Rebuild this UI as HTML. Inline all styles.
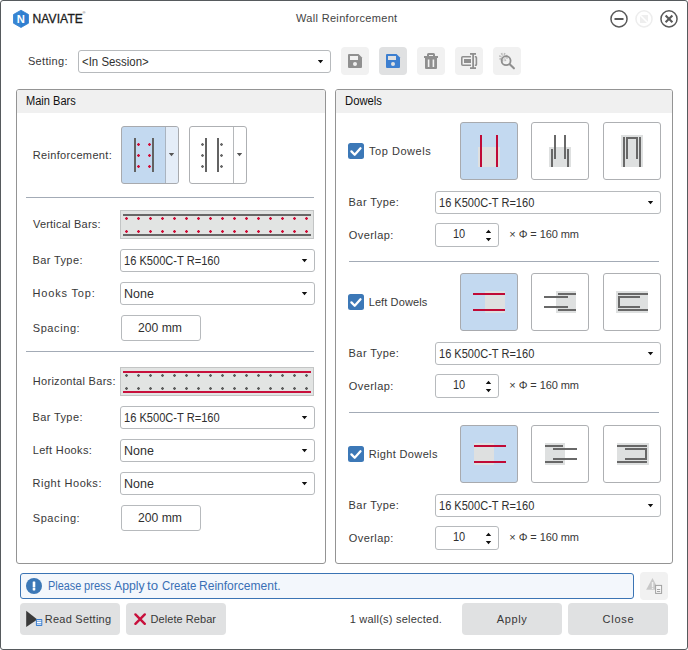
<!DOCTYPE html>
<html lang="en">
<head>
<meta charset="utf-8">
<title>Wall Reinforcement</title>
<style>
html,body{margin:0;padding:0;background:#fff;}
body{width:688px;height:650px;overflow:hidden;}
#win{position:relative;width:686px;height:648px;border:1px solid #565a5d;border-radius:3px;background:#fff;overflow:hidden;font-family:"Liberation Sans",Arial,sans-serif;}
#win>*{position:absolute;box-sizing:border-box;margin:-1px 0 0 -1px;}
.t{white-space:nowrap;line-height:1;transform-origin:0 0;}
.panel{border:1px solid #949494;border-radius:3px;background:#fff;}
.phead{position:absolute;left:0;top:0;right:0;height:23px;background:#f0f0f0;border-radius:2px 2px 0 0;}
.sep{height:1px;background:#a3abb6;}
.combo,.box{border:1px solid #b7babd;border-radius:3px;background:#fff;}
.tb{width:28px;height:28px;border-radius:4px;background:#f1f1f1;}
.tb.on{background:#e0e1e2;}
.ib{width:58px;height:58px;border:1px solid #aeb0b3;border-radius:3px;background:#fff;}
.ib.sel{background:#c3d9f0;border-color:#a8aaae;}
.btn{width:100px;height:32px;border-radius:4px;background:#e0e1e2;}
.chk{width:16px;height:16px;border-radius:2.5px;background:#3c78b7;}
.barimg{width:194px;height:29px;border:1px solid #c3c5c5;background:#e2e4e3;}
svg{display:block;overflow:visible;}

</style>
</head>
<body>
<div id="win">
<div class="combo" style="left:78px;top:50px;width:253px;height:23px;"></div>
<div class="tb" style="left:341px;top:47px;"></div>
<div class="tb on" style="left:379px;top:47px;"></div>
<div class="tb" style="left:417px;top:47px;"></div>
<div class="tb" style="left:455px;top:47px;"></div>
<div class="tb" style="left:493px;top:47px;"></div>
<div class="panel" style="left:16px;top:89px;width:310px;height:475px;"><div class="phead"></div></div>
<div class="panel" style="left:335px;top:89px;width:338px;height:475px;"><div class="phead"></div></div>
<div class="ib sel" style="left:121px;top:126px;"><div style="position:absolute;left:43px;top:0;width:13px;height:56px;box-sizing:border-box;background:#e4edf8;border-left:1px solid #aab4c0;border-radius:0 2px 2px 0"></div></div>
<div class="ib" style="left:189px;top:126px;"><div style="position:absolute;left:43px;top:0;width:0;height:56px;border-left:1px solid #b5b8bb"></div></div>
<div class="sep" style="left:26px;top:197px;width:288px;height:1px;"></div>
<div class="sep" style="left:26px;top:351px;width:288px;height:1px;"></div>
<div class="barimg" style="left:120px;top:210px;"></div>
<div class="barimg" style="left:120px;top:367px;"></div>
<div class="combo" style="left:120px;top:249px;width:195px;height:23px;"></div>
<div class="combo" style="left:120px;top:282px;width:195px;height:23px;"></div>
<div class="combo" style="left:120px;top:406px;width:195px;height:23px;"></div>
<div class="combo" style="left:120px;top:439px;width:195px;height:23px;"></div>
<div class="combo" style="left:120px;top:472px;width:195px;height:23px;"></div>
<div class="box" style="left:121px;top:315px;width:80px;height:26px;"></div>
<div class="box" style="left:121px;top:505px;width:80px;height:26px;"></div>
<div class="chk" style="left:348px;top:143px;"></div>
<div class="ib sel" style="left:460px;top:122px;"></div>
<div class="ib" style="left:531px;top:122px;"></div>
<div class="ib" style="left:603px;top:122px;"></div>
<div class="chk" style="left:348px;top:294px;"></div>
<div class="ib sel" style="left:460px;top:273px;"></div>
<div class="ib" style="left:531px;top:273px;"></div>
<div class="ib" style="left:603px;top:273px;"></div>
<div class="chk" style="left:348px;top:446px;"></div>
<div class="ib sel" style="left:460px;top:425px;"></div>
<div class="ib" style="left:531px;top:425px;"></div>
<div class="ib" style="left:603px;top:425px;"></div>
<div class="combo" style="left:435px;top:191px;width:226px;height:23px;"></div>
<div class="box" style="left:435px;top:223px;width:64px;height:24px;"></div>
<div class="combo" style="left:435px;top:342px;width:226px;height:23px;"></div>
<div class="box" style="left:435px;top:374px;width:64px;height:24px;"></div>
<div class="combo" style="left:435px;top:494px;width:226px;height:23px;"></div>
<div class="box" style="left:435px;top:526px;width:64px;height:24px;"></div>
<div class="sep" style="left:349px;top:261px;width:310px;height:1px;"></div>
<div class="sep" style="left:349px;top:412px;width:310px;height:1px;"></div>
<div class="status" style="left:20px;top:573px;width:614px;height:26px;border:1px solid #3b74b4;border-radius:3px;background:#f3f7fc;"></div>
<div class="tb" style="left:640px;top:572px;background:#f1f1f1;"></div>
<div class="btn" style="left:20px;top:603px;"></div>
<div class="btn" style="left:126px;top:603px;"></div>
<div class="btn" style="left:462px;top:603px;"></div>
<div class="btn" style="left:568px;top:603px;"></div><svg width="688" height="650" viewBox="0 0 688 650" style="left:0;top:0;pointer-events:none">
<defs><g id="pd" shape-rendering="crispEdges"><rect x="-1.5" y="-0.5" width="3" height="1"/><rect x="-0.5" y="-1.5" width="1" height="3"/><rect x="-1.5" y="-1.5" width="3" height="3" opacity="0.28"/></g></defs>
<g><path d="M21 10.2 L28.5 14.5 L28.5 23.2 L21 27.5 L13.5 23.2 L13.5 14.5 Z" fill="#2f7ed0" stroke="#2f7ed0" stroke-width="0.8" stroke-linejoin="round"/><path d="M21 10.2 L13.5 14.5 L13.5 23.2 L21 27.5 Z" fill="#4d94dc" opacity=".3"/><text x="20.9" y="22.8" text-anchor="middle" font-family="Liberation Sans, Arial, sans-serif" font-weight="bold" font-size="11.2" fill="#fff">N</text></g>
<g fill="none" stroke="#595959" stroke-width="1.5"><circle cx="619" cy="18.9" r="8.05"/><circle cx="669" cy="18.9" r="8.05"/></g>
<rect x="614.5" y="18" width="9" height="2" fill="#595959"/>
<path d="M665.6 15.5 L672.4 22.3 M672.4 15.5 L665.6 22.3" stroke="#595959" stroke-width="2.1" fill="none"/>
<g><circle cx="644" cy="18.9" r="8.05" fill="none" stroke="#ededed" stroke-width="1.5"/><path d="M640 15 h8 v8 h-8z" fill="#eeeeee"/><path d="M640 15 L648 23" stroke="#fff" stroke-width="1.6"/></g>
<g><path d="M349 54 h9.5 l3.5 3.5 v9.5 a1 1 0 0 1 -1 1 h-12 a1 1 0 0 1 -1 -1 v-12 a1 1 0 0 1 1 -1z" fill="#909090"/><rect x="350" y="56" width="8" height="4" fill="#f1f1f1"/><circle cx="355" cy="64" r="2" fill="#f1f1f1"/></g>
<g><path d="M387 54 h9.5 l3.5 3.5 v9.5 a1 1 0 0 1 -1 1 h-12 a1 1 0 0 1 -1 -1 v-12 a1 1 0 0 1 1 -1z" fill="#3d7fd0"/><rect x="388" y="56" width="8" height="4" fill="#e0e1e2"/><circle cx="393" cy="64" r="2" fill="#e0e1e2"/></g>
<g fill="#8f8f8f"><rect x="424" y="56" width="14" height="2"/><path d="M427 56 v-1.5 a1.5 1.5 0 0 1 1.5 -1.5 h5 a1.5 1.5 0 0 1 1.5 1.5 v1.5 h-2 v-1 h-4 v1z"/><path d="M425 58 h12 v10 a1 1 0 0 1 -1 1 h-10 a1 1 0 0 1 -1 -1z M427.8 59.5 v7.5 h1.6 v-7.5z M432.6 59.5 v7.5 h1.6 v-7.5z" fill-rule="evenodd"/></g>
<g fill="none" stroke="#8f8f8f" stroke-width="1.6"><path d="M471 56.8 h-8.2 a1 1 0 0 0 -1 1 v6.4 a1 1 0 0 0 1 1 h8.2 M474.8 56.8 h0.9 a0.7 0.7 0 0 1 0.7 0.7 v7 a0.7 0.7 0 0 1 -0.7 0.7 h-0.9"/></g>
<g fill="#8f8f8f"><rect x="464" y="59" width="7" height="4"/><rect x="472.2" y="53" width="1.8" height="16"/><rect x="470" y="53" width="6" height="1.8"/><rect x="470" y="67.2" width="6" height="1.8"/></g>
<g fill="none"><circle cx="503.4" cy="57.2" r="3.5" stroke="#bcbcbc" stroke-width="1.9" stroke-dasharray="1.5 1.25"/><circle cx="503.4" cy="57.2" r="1.9" stroke="#cfcfcf" stroke-width="1"/><circle cx="506.1" cy="60.7" r="4.5" stroke="#8f8f8f" stroke-width="1.8"/><path d="M509.7 64.3 L513.9 68.3" stroke="#8f8f8f" stroke-width="2.1" stroke-linecap="round"/></g>
<g shape-rendering="crispEdges" fill="#636363"><rect x="134" y="138" width="2" height="34"/><rect x="152" y="138" width="2" height="34"/><rect x="205" y="138" width="2" height="34"/><rect x="217" y="138" width="2" height="34"/></g>
<use href="#pd" x="138.5" y="144.5" fill="#d0103a"/><use href="#pd" x="149.5" y="144.5" fill="#d0103a"/><use href="#pd" x="202.5" y="144.5" fill="#6a6a6a"/><use href="#pd" x="221.5" y="144.5" fill="#6a6a6a"/><use href="#pd" x="138.5" y="155.5" fill="#d0103a"/><use href="#pd" x="149.5" y="155.5" fill="#d0103a"/><use href="#pd" x="202.5" y="155.5" fill="#6a6a6a"/><use href="#pd" x="221.5" y="155.5" fill="#6a6a6a"/><use href="#pd" x="138.5" y="166.5" fill="#d0103a"/><use href="#pd" x="149.5" y="166.5" fill="#d0103a"/><use href="#pd" x="202.5" y="166.5" fill="#6a6a6a"/><use href="#pd" x="221.5" y="166.5" fill="#6a6a6a"/>
<g shape-rendering="crispEdges" fill="#676767"><rect x="123" y="214" width="188" height="2"/><rect x="123" y="234" width="188" height="2"/></g>
<use href="#pd" x="126.5" y="218.5" fill="#d0103a"/><use href="#pd" x="138.5" y="218.5" fill="#d0103a"/><use href="#pd" x="150.5" y="218.5" fill="#d0103a"/><use href="#pd" x="162.5" y="218.5" fill="#d0103a"/><use href="#pd" x="174.5" y="218.5" fill="#d0103a"/><use href="#pd" x="186.5" y="218.5" fill="#d0103a"/><use href="#pd" x="198.5" y="218.5" fill="#d0103a"/><use href="#pd" x="210.5" y="218.5" fill="#d0103a"/><use href="#pd" x="222.5" y="218.5" fill="#d0103a"/><use href="#pd" x="234.5" y="218.5" fill="#d0103a"/><use href="#pd" x="246.5" y="218.5" fill="#d0103a"/><use href="#pd" x="258.5" y="218.5" fill="#d0103a"/><use href="#pd" x="270.5" y="218.5" fill="#d0103a"/><use href="#pd" x="282.5" y="218.5" fill="#d0103a"/><use href="#pd" x="294.5" y="218.5" fill="#d0103a"/><use href="#pd" x="306.5" y="218.5" fill="#d0103a"/><use href="#pd" x="126.5" y="231.5" fill="#d0103a"/><use href="#pd" x="138.5" y="231.5" fill="#d0103a"/><use href="#pd" x="150.5" y="231.5" fill="#d0103a"/><use href="#pd" x="162.5" y="231.5" fill="#d0103a"/><use href="#pd" x="174.5" y="231.5" fill="#d0103a"/><use href="#pd" x="186.5" y="231.5" fill="#d0103a"/><use href="#pd" x="198.5" y="231.5" fill="#d0103a"/><use href="#pd" x="210.5" y="231.5" fill="#d0103a"/><use href="#pd" x="222.5" y="231.5" fill="#d0103a"/><use href="#pd" x="234.5" y="231.5" fill="#d0103a"/><use href="#pd" x="246.5" y="231.5" fill="#d0103a"/><use href="#pd" x="258.5" y="231.5" fill="#d0103a"/><use href="#pd" x="270.5" y="231.5" fill="#d0103a"/><use href="#pd" x="282.5" y="231.5" fill="#d0103a"/><use href="#pd" x="294.5" y="231.5" fill="#d0103a"/><use href="#pd" x="306.5" y="231.5" fill="#d0103a"/>
<g shape-rendering="crispEdges" fill="#c8103c"><rect x="123" y="371" width="188" height="2"/><rect x="123" y="391" width="188" height="2"/></g>
<use href="#pd" x="126.5" y="375.5" fill="#5e5e5e"/><use href="#pd" x="138.5" y="375.5" fill="#5e5e5e"/><use href="#pd" x="150.5" y="375.5" fill="#5e5e5e"/><use href="#pd" x="162.5" y="375.5" fill="#5e5e5e"/><use href="#pd" x="174.5" y="375.5" fill="#5e5e5e"/><use href="#pd" x="186.5" y="375.5" fill="#5e5e5e"/><use href="#pd" x="198.5" y="375.5" fill="#5e5e5e"/><use href="#pd" x="210.5" y="375.5" fill="#5e5e5e"/><use href="#pd" x="222.5" y="375.5" fill="#5e5e5e"/><use href="#pd" x="234.5" y="375.5" fill="#5e5e5e"/><use href="#pd" x="246.5" y="375.5" fill="#5e5e5e"/><use href="#pd" x="258.5" y="375.5" fill="#5e5e5e"/><use href="#pd" x="270.5" y="375.5" fill="#5e5e5e"/><use href="#pd" x="282.5" y="375.5" fill="#5e5e5e"/><use href="#pd" x="294.5" y="375.5" fill="#5e5e5e"/><use href="#pd" x="306.5" y="375.5" fill="#5e5e5e"/><use href="#pd" x="126.5" y="388.5" fill="#5e5e5e"/><use href="#pd" x="138.5" y="388.5" fill="#5e5e5e"/><use href="#pd" x="150.5" y="388.5" fill="#5e5e5e"/><use href="#pd" x="162.5" y="388.5" fill="#5e5e5e"/><use href="#pd" x="174.5" y="388.5" fill="#5e5e5e"/><use href="#pd" x="186.5" y="388.5" fill="#5e5e5e"/><use href="#pd" x="198.5" y="388.5" fill="#5e5e5e"/><use href="#pd" x="210.5" y="388.5" fill="#5e5e5e"/><use href="#pd" x="222.5" y="388.5" fill="#5e5e5e"/><use href="#pd" x="234.5" y="388.5" fill="#5e5e5e"/><use href="#pd" x="246.5" y="388.5" fill="#5e5e5e"/><use href="#pd" x="258.5" y="388.5" fill="#5e5e5e"/><use href="#pd" x="270.5" y="388.5" fill="#5e5e5e"/><use href="#pd" x="282.5" y="388.5" fill="#5e5e5e"/><use href="#pd" x="294.5" y="388.5" fill="#5e5e5e"/><use href="#pd" x="306.5" y="388.5" fill="#5e5e5e"/>
<g shape-rendering="crispEdges">
<rect x="478" y="147" width="22" height="20" fill="#dee0e0"/><rect x="480" y="135" width="2" height="32" fill="#c00a36"/><rect x="496" y="135" width="2" height="32" fill="#c00a36"/>
<rect x="549" y="147" width="22" height="20" fill="#dee0e0"/><rect x="554" y="135" width="2" height="24" fill="#686868"/><rect x="564" y="135" width="2" height="24" fill="#686868"/><rect x="551" y="149" width="2" height="18" fill="#686868"/><rect x="567" y="149" width="2" height="18" fill="#686868"/>
<rect x="621" y="135" width="22" height="32" fill="#dee0e0"/><rect x="623" y="137" width="2" height="30" fill="#686868"/><rect x="639" y="137" width="2" height="30" fill="#686868"/><rect x="626" y="137" width="2" height="22" fill="#686868"/><rect x="636" y="137" width="2" height="22" fill="#686868"/><rect x="626" y="137" width="12" height="2" fill="#686868"/>
<rect x="485" y="291" width="20" height="22" fill="#dee0e0"/><rect x="473" y="293" width="32" height="2" fill="#c00a36"/><rect x="473" y="309" width="32" height="2" fill="#c00a36"/>
<rect x="556" y="291" width="20" height="22" fill="#dee0e0"/><rect x="558" y="293" width="18" height="2" fill="#686868"/><rect x="558" y="309" width="18" height="2" fill="#686868"/><rect x="544" y="296" width="24" height="2" fill="#686868"/><rect x="544" y="306" width="24" height="2" fill="#686868"/>
<rect x="616" y="291" width="32" height="22" fill="#dee0e0"/><rect x="618" y="293" width="30" height="2" fill="#686868"/><rect x="618" y="309" width="30" height="2" fill="#686868"/><rect x="618" y="296" width="22" height="2" fill="#686868"/><rect x="618" y="306" width="22" height="2" fill="#686868"/><rect x="618" y="296" width="2" height="12" fill="#686868"/>
<rect x="474" y="443" width="20" height="22" fill="#dee0e0"/><rect x="474" y="445" width="32" height="2" fill="#c00a36"/><rect x="474" y="461" width="32" height="2" fill="#c00a36"/>
<rect x="545" y="443" width="20" height="22" fill="#dee0e0"/><rect x="545" y="445" width="18" height="2" fill="#686868"/><rect x="545" y="461" width="18" height="2" fill="#686868"/><rect x="553" y="448" width="24" height="2" fill="#686868"/><rect x="553" y="458" width="24" height="2" fill="#686868"/>
<rect x="617" y="443" width="32" height="22" fill="#dee0e0"/><rect x="617" y="445" width="30" height="2" fill="#686868"/><rect x="617" y="461" width="30" height="2" fill="#686868"/><rect x="625" y="448" width="22" height="2" fill="#686868"/><rect x="625" y="458" width="22" height="2" fill="#686868"/><rect x="645" y="448" width="2" height="12" fill="#686868"/>
</g>
<path d="M317.8 60 h5.4 l-2.7 3.3 z M301.8 259 h5.4 l-2.7 3.3 z M301.8 292 h5.4 l-2.7 3.3 z M301.8 416 h5.4 l-2.7 3.3 z M301.8 449 h5.4 l-2.7 3.3 z M301.8 482 h5.4 l-2.7 3.3 z M647.8 201 h5.4 l-2.7 3.3 z M485.8 233.1 h5.4 l-2.7 -3.3 z M485.8 238 h5.4 l-2.7 3.3 z M647.8 352 h5.4 l-2.7 3.3 z M485.8 384.1 h5.4 l-2.7 -3.3 z M485.8 389 h5.4 l-2.7 3.3 z M647.8 504 h5.4 l-2.7 3.3 z M485.8 536.1 h5.4 l-2.7 -3.3 z M485.8 541 h5.4 l-2.7 3.3 z" fill="#111"/>
<path d="M168.8 153 h5.4 l-2.7 3.3 z M236.8 153 h5.4 l-2.7 3.3 z" fill="#555"/>
<path d="M351.4 151.4 l3.3 3.3 l5.8 -6.4" fill="none" stroke="#fff" stroke-width="2.3" stroke-linecap="round" stroke-linejoin="round"/>
<path d="M351.4 302.4 l3.3 3.3 l5.8 -6.4" fill="none" stroke="#fff" stroke-width="2.3" stroke-linecap="round" stroke-linejoin="round"/>
<path d="M351.4 454.4 l3.3 3.3 l5.8 -6.4" fill="none" stroke="#fff" stroke-width="2.3" stroke-linecap="round" stroke-linejoin="round"/>
<circle cx="34" cy="586" r="8" fill="#3c78b7"/><rect x="32.7" y="581.6" width="2.6" height="5.8" rx="0.5" fill="#fff"/><rect x="32.7" y="588.1" width="2.6" height="2.3" rx="0.4" fill="#fff"/>
<path d="M26.2 610.8 L37.3 619.4 L26.2 627 Z" fill="#3a3a3a"/>
<rect x="35.9" y="619" width="6.4" height="6.9" rx="0.7" fill="#3d7fd0"/><g fill="#fff"><rect x="36.9" y="620.2" width="4.4" height="1.1"/><rect x="36.9" y="621.9" width="4.4" height="1.1"/><rect x="36.9" y="623.6" width="4.4" height="1.1"/></g>
<path d="M135.4 614.4 L144.8 623.8 M144.8 614.4 L135.4 623.8" stroke="#c8103c" stroke-width="2.4" stroke-linecap="round" fill="none"/>
<path d="M652.5 578 L658.6 589.8 H646.2 Z" fill="#c8c8c8"/><rect x="651.8" y="582" width="1.5" height="5" fill="#f1f1f1"/><rect x="651.8" y="587.7" width="1.5" height="1.3" fill="#f1f1f1"/>
<rect x="655.6" y="585.4" width="6" height="8" fill="#f7f7f7" stroke="#a0a0a0" stroke-width="1"/><g fill="#a6a6a6"><rect x="657" y="589" width="3.2" height="1"/><rect x="657" y="591" width="3.2" height="1"/></g>
</svg>
<!-- text -->
<div class="t" style="left:295.97px;top:12.69px;font-size:11px;color:#444;letter-spacing:0.329px;">Wall Reinforcement</div>
<div class="t" style="left:32.41px;top:12.84px;font-size:12px;color:#1c1c1c;letter-spacing:0.148px;-webkit-text-stroke:0.3px #1c1c1c">NAVIATE</div>
<div class="t" style="left:82.52px;top:11.21px;font-size:4px;color:#555;letter-spacing:0.000px;">®</div>
<div class="t" style="left:27.96px;top:56.39px;font-size:11px;color:#383838;letter-spacing:0.321px;">Setting:</div>
<div class="t" style="left:82.40px;top:55.54px;font-size:12px;color:#303030;transform:scaleX(0.9525);">&lt;In Session&gt;</div>
<div class="t" style="left:25.87px;top:94.84px;font-size:12px;color:#111;transform:scaleX(0.9208);">Main Bars</div>
<div class="t" style="left:344.65px;top:94.84px;font-size:12px;color:#111;transform:scaleX(0.9384);">Dowels</div>
<div class="t" style="left:32.67px;top:149.69px;font-size:11px;color:#383838;letter-spacing:0.349px;">Reinforcement:</div>
<div class="t" style="left:32.95px;top:218.69px;font-size:11px;color:#383838;letter-spacing:0.216px;">Vertical Bars:</div>
<div class="t" style="left:32.47px;top:254.69px;font-size:11px;color:#383838;letter-spacing:0.386px;">Bar Type:</div>
<div class="t" style="left:32.47px;top:287.69px;font-size:11px;color:#383838;letter-spacing:0.832px;">Hooks Top:</div>
<div class="t" style="left:32.76px;top:322.69px;font-size:11px;color:#383838;letter-spacing:0.585px;">Spacing:</div>
<div class="t" style="left:32.77px;top:375.69px;font-size:11px;color:#383838;letter-spacing:0.296px;">Horizontal Bars:</div>
<div class="t" style="left:32.47px;top:411.69px;font-size:11px;color:#383838;letter-spacing:0.386px;">Bar Type:</div>
<div class="t" style="left:32.67px;top:444.69px;font-size:11px;color:#383838;letter-spacing:0.354px;">Left Hooks:</div>
<div class="t" style="left:32.47px;top:477.69px;font-size:11px;color:#383838;letter-spacing:0.549px;">Right Hooks:</div>
<div class="t" style="left:32.76px;top:512.69px;font-size:11px;color:#383838;letter-spacing:0.585px;">Spacing:</div>
<div class="t" style="left:123.89px;top:254.84px;font-size:12px;color:#303030;transform:scaleX(0.9244);">16 K500C-T R=160</div>
<div class="t" style="left:123.84px;top:287.84px;font-size:12px;color:#303030;transform:scaleX(1.0395);">None</div>
<div class="t" style="left:138.34px;top:321.84px;font-size:12px;color:#303030;transform:scaleX(1.0150);">200 mm</div>
<div class="t" style="left:123.89px;top:411.84px;font-size:12px;color:#303030;transform:scaleX(0.9244);">16 K500C-T R=160</div>
<div class="t" style="left:123.84px;top:444.84px;font-size:12px;color:#303030;transform:scaleX(1.0395);">None</div>
<div class="t" style="left:123.84px;top:477.84px;font-size:12px;color:#303030;transform:scaleX(1.0395);">None</div>
<div class="t" style="left:137.84px;top:511.84px;font-size:12px;color:#303030;transform:scaleX(1.0150);">200 mm</div>
<div class="t" style="left:369.01px;top:145.69px;font-size:11px;color:#383838;letter-spacing:0.534px;">Top Dowels</div>
<div class="t" style="left:348.57px;top:197.19px;font-size:11px;color:#383838;letter-spacing:0.436px;">Bar Type:</div>
<div class="t" style="left:348.82px;top:229.69px;font-size:11px;color:#383838;letter-spacing:0.426px;">Overlap:</div>
<div class="t" style="left:439.00px;top:196.84px;font-size:12px;color:#303030;transform:scaleX(0.9205);">16 K500C-T R=160</div>
<div class="t" style="left:453.20px;top:227.84px;font-size:12px;color:#303030;transform:scaleX(0.9156);">10</div>
<div class="t" style="left:509.35px;top:229.19px;font-size:11px;color:#383838;letter-spacing:-0.083px;">× Φ = 160 mm</div>
<div class="t" style="left:368.67px;top:296.69px;font-size:11px;color:#383838;letter-spacing:0.112px;">Left Dowels</div>
<div class="t" style="left:348.57px;top:348.19px;font-size:11px;color:#383838;letter-spacing:0.436px;">Bar Type:</div>
<div class="t" style="left:348.82px;top:380.69px;font-size:11px;color:#383838;letter-spacing:0.426px;">Overlap:</div>
<div class="t" style="left:439.00px;top:347.84px;font-size:12px;color:#303030;transform:scaleX(0.9205);">16 K500C-T R=160</div>
<div class="t" style="left:453.20px;top:378.84px;font-size:12px;color:#303030;transform:scaleX(0.9156);">10</div>
<div class="t" style="left:509.35px;top:380.19px;font-size:11px;color:#383838;letter-spacing:-0.083px;">× Φ = 160 mm</div>
<div class="t" style="left:368.67px;top:448.69px;font-size:11px;color:#383838;letter-spacing:0.359px;">Right Dowels</div>
<div class="t" style="left:348.57px;top:500.19px;font-size:11px;color:#383838;letter-spacing:0.436px;">Bar Type:</div>
<div class="t" style="left:348.82px;top:532.69px;font-size:11px;color:#383838;letter-spacing:0.426px;">Overlap:</div>
<div class="t" style="left:439.00px;top:499.84px;font-size:12px;color:#303030;transform:scaleX(0.9205);">16 K500C-T R=160</div>
<div class="t" style="left:453.20px;top:530.84px;font-size:12px;color:#303030;transform:scaleX(0.9156);">10</div>
<div class="t" style="left:509.35px;top:532.19px;font-size:11px;color:#383838;letter-spacing:-0.083px;">× Φ = 160 mm</div>
<div class="t" style="left:47.59px;top:579.84px;font-size:12px;color:#3a6fb5;transform:scaleX(0.9052);">Please</div>
<div class="t" style="left:83.99px;top:579.84px;font-size:12px;color:#3a6fb5;transform:scaleX(0.9262);">press</div>
<div class="t" style="left:114.27px;top:579.84px;font-size:12px;color:#3a6fb5;transform:scaleX(1.0197);">Apply</div>
<div class="t" style="left:147.35px;top:579.84px;font-size:12px;color:#3a6fb5;transform:scaleX(1.1025);">to</div>
<div class="t" style="left:161.97px;top:579.84px;font-size:12px;color:#3a6fb5;transform:scaleX(0.9516);">Create</div>
<div class="t" style="left:198.98px;top:579.84px;font-size:12px;color:#3a6fb5;transform:scaleX(1.0036);">Reinforcement.</div>
<div class="t" style="left:44.77px;top:613.99px;font-size:11px;color:#383838;letter-spacing:0.247px;">Read Setting</div>
<div class="t" style="left:150.57px;top:613.99px;font-size:11px;color:#383838;letter-spacing:0.059px;">Delete Rebar</div>
<div class="t" style="left:349.72px;top:613.69px;font-size:11px;color:#383838;letter-spacing:0.227px;">1 wall(s) selected.</div>
<div class="t" style="left:496.77px;top:613.99px;font-size:11px;color:#383838;letter-spacing:0.610px;">Apply</div>
<div class="t" style="left:602.57px;top:613.99px;font-size:11px;color:#383838;letter-spacing:0.724px;">Close</div>
</div>
</body>
</html>
